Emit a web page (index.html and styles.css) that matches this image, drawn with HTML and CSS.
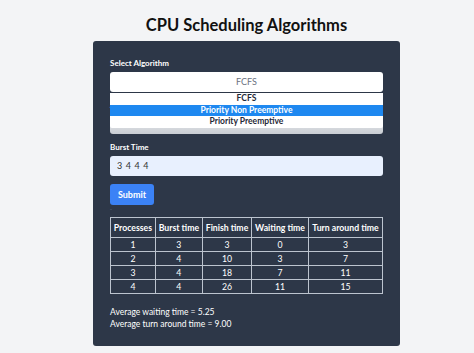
FILE: index.html
```html
<!DOCTYPE html>
<html>
<head>
<meta charset="utf-8">
<link rel="stylesheet" href="styles.css">
</head>
<body>
<div class="page">
  <h1 class="title">CPU Scheduling Algorithms</h1>
  <div class="card">
    <div class="group select-group">
      <label class="label">Select Algorithm</label>
      <div class="select">FCFS</div>
      <ul class="menu">
        <li class="opt">FCFS</li>
        <li class="opt active">Priority Non Preemptive</li>
        <li class="opt">Priority Preemptive</li>
      </ul>
    </div>
    <div class="group">
      <label class="label">Arrival Time</label>
      <div class="input covered">0 0 0 0</div>
    </div>
    <div class="group">
      <label class="label">Burst Time</label>
      <div class="input filled">3 4 4 4</div>
    </div>
    <button class="btn">Submit</button>
    <div class="mark">..</div>
    <table class="tbl">
      <thead>
        <tr><th>Processes</th><th>Burst time</th><th>Finish time</th><th>Waiting time</th><th>Turn around time</th></tr>
      </thead>
      <tbody>
        <tr><td>1</td><td>3</td><td>3</td><td>0</td><td>3</td></tr>
        <tr><td>2</td><td>4</td><td>10</td><td>3</td><td>7</td></tr>
        <tr><td>3</td><td>4</td><td>18</td><td>7</td><td>11</td></tr>
        <tr><td>4</td><td>4</td><td>26</td><td>11</td><td>15</td></tr>
      </tbody>
    </table>
    <p class="avg">Average waiting time = 5.25</p>
    <p class="avg">Average turn around time = 9.00</p>
  </div>
</div>
</body>
</html>
```

FILE: styles.css
```css
* { box-sizing: border-box; }
html, body { margin: 0; padding: 0; }
body {
  background: #f3f4f6;
  font-family: Lato, "Open Sans", sans-serif;
  color: #111;
}
.page {
  width: 307px;
  margin-left: 93px;
  padding-top: 14px;
}
.title {
  margin: 0 0 5px 0;
  font-size: 16.5px;
  line-height: 22px;
  font-weight: 700;
  text-align: center;
  color: #111;
  width: 307px;
}
.card {
  background: #2d3748;
  border-radius: 3px;
  padding: 17px 17px 16px 17px;
  color: #fff;
}
.group { margin-bottom: 8px; position: relative; }
.label {
  display: block;
  font-size: 8px;
  line-height: 10px;
  font-weight: 700;
  margin-bottom: 4px;
  color: #fff;
}
.select, .input {
  height: 20px;
  border-radius: 3px;
  background: #fff;
  font-size: 9px;
  line-height: 20px;
  color: #4b5563;
}
.select { text-align: center; color: #6b7280; }
.input { padding-left: 7px; }
.covered {
  background: linear-gradient(#f1f2f4, #c9cdd3);
  color: #6b6f75;
}
.filled { background: #e8f0fe; color: #333; letter-spacing: 0.6px; }
.menu {
  position: absolute;
  left: 0;
  right: 0;
  top: 35px;
  margin: 0;
  padding: 0;
  list-style: none;
  background: #fff;
  border-radius: 0 0 2px 2px;
  z-index: 2;
}
.opt {
  height: 11.5px;
  line-height: 11.5px;
  font-size: 8.5px;
  font-weight: 700;
  text-align: center;
  color: #1f2937;
}
.opt.active { background: #1e88f0; color: #fff; }
.btn {
  display: block;
  margin-top: 8px;
  width: 44px;
  height: 21px;
  border: 0;
  border-radius: 3px;
  background: #3b82f6;
  color: #fff;
  font-family: inherit;
  font-size: 9px;
  font-weight: 700;
  padding: 0;
}
.mark {
  height: 12px;
  font-size: 4px;
  line-height: 8px;
  color: #8a94a3;
}
.tbl {
  width: 273px;
  border-collapse: collapse;
  font-size: 8.7px;
  color: #fff;
}
.tbl th, .tbl td {
  border: 1px solid #bcc4cf;
  text-align: center;
  padding: 0 2px;
  white-space: nowrap;
}
.tbl th { height: 20px; font-weight: 700; }
.tbl td { height: 14px; }
.avg {
  margin: 0;
  font-size: 8.5px;
  line-height: 12px;
  color: #fff;
}
.tbl + .avg { margin-top: 12px; }
```
